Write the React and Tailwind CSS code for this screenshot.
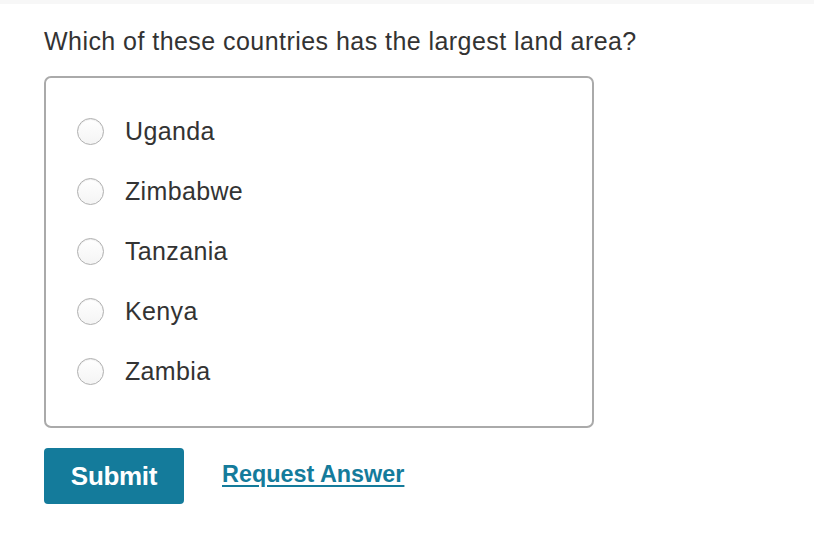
export default function App() {
  const options = ['Uganda', 'Zimbabwe', 'Tanzania', 'Kenya', 'Zambia']
  return (
    <div className="w-[814px] h-[540px] bg-white font-['Liberation_Sans',Arial,sans-serif] text-[#333333]">
      <div className="h-[4px] bg-[#f7f7f7]" />
      <div className="pl-[44px] pt-[22px]">
        <h1 className="text-[25px] leading-[30px] tracking-[0.45px]">Which of these countries has the largest land area?</h1>
        <div className="mt-[20px] w-[550px] h-[352px] border-2 border-[#aaaaaa] rounded-[7px] pt-[38px] pl-[31px]">
          {options.map((o) => (
            <label key={o} className="flex items-center h-[60px] first:mt-[-15px]">
              <span className="w-[27px] h-[27px] rounded-full border border-[#b0b0b0] bg-gradient-to-b from-white to-[#f4f4f4] shadow-[inset_0_1px_1px_rgba(0,0,0,0.08)] shrink-0" />
              <span className="ml-[21px] text-[25px] leading-[30px] tracking-[0.35px]">{o}</span>
            </label>
          ))}
        </div>
        <div className="flex items-center mt-[20px]">
          <button className="w-[140px] h-[56px] bg-[#147b9b] rounded-[4px] text-white text-[26px] font-bold tracking-[-0.3px]">Submit</button>
          <a href="#" className="ml-[38px] -mt-[2px] text-[#147b9b] text-[23.4px] font-bold underline underline-offset-[3px] decoration-2">Request Answer</a>
        </div>
      </div>
    </div>
  )
}
